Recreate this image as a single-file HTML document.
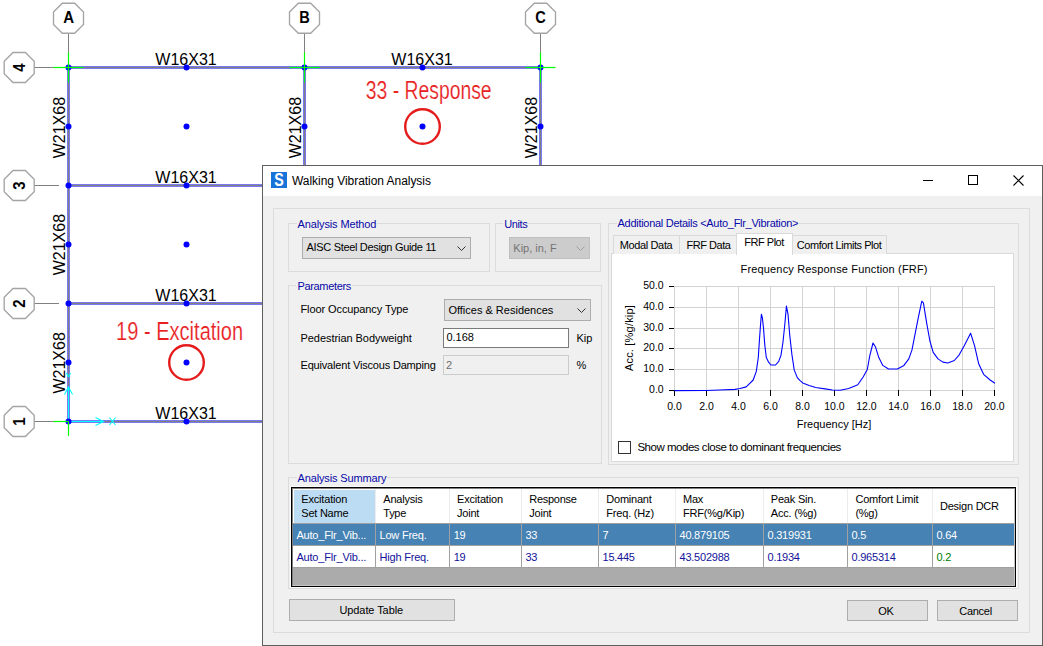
<!DOCTYPE html>
<html><head><meta charset="utf-8">
<style>
*{box-sizing:border-box}
html,body{margin:0;padding:0}
body{width:1043px;height:646px;position:relative;overflow:hidden;background:#fff;font-family:"Liberation Sans",sans-serif;color:#000}
.a{position:absolute}
.t{position:absolute;white-space:nowrap}
</style></head><body>
<svg class="a" style="left:0;top:0" width="1043" height="646">
 <g font-family="Liberation Sans" >
 <!-- grid lines grey -->
 <g stroke="#808080" stroke-width="1" fill="none">
  <line x1="68.5" y1="33" x2="68.5" y2="60"/>
  <line x1="304.5" y1="33" x2="304.5" y2="60"/>
  <line x1="540.5" y1="33" x2="540.5" y2="60"/>
  <line x1="34" y1="67.5" x2="60" y2="67.5"/>
  <line x1="34" y1="185.5" x2="59" y2="185.5"/>
  <line x1="34" y1="303.5" x2="59" y2="303.5"/>
  <line x1="34" y1="421.5" x2="60" y2="421.5"/>
 </g>
 <!-- beams -->
 <g fill="#7878f0">
  <rect x="68" y="66" width="473" height="3"/>
  <rect x="68" y="184" width="473" height="3"/>
  <rect x="68" y="302" width="473" height="3"/>
  <rect x="68" y="420" width="473" height="3"/>
  <rect x="67" y="67" width="3" height="355"/>
  <rect x="303" y="67" width="3" height="355"/>
  <rect x="539" y="67" width="3" height="355"/>
 </g>
 <g fill="#808080">
  <rect x="68" y="67" width="473" height="1"/>
  <rect x="68" y="185" width="473" height="1"/>
  <rect x="68" y="303" width="473" height="1"/>
  <rect x="68" y="421" width="473" height="1"/>
  <rect x="68" y="67" width="1" height="355"/>
  <rect x="304" y="67" width="1" height="355"/>
  <rect x="540" y="67" width="1" height="355"/>
 </g>
 <!-- octagons -->
 <g fill="#fff" stroke="#a4a4a4" stroke-width="1.35">
  <polygon id="oct" points="-6.2,-15 6.2,-15 15,-6.2 15,6.2 6.2,15 -6.2,15 -15,6.2 -15,-6.2" transform="translate(68.5,18.2)"/>
  <polygon points="-6.2,-15 6.2,-15 15,-6.2 15,6.2 6.2,15 -6.2,15 -15,6.2 -15,-6.2" transform="translate(304.5,18.2)"/>
  <polygon points="-6.2,-15 6.2,-15 15,-6.2 15,6.2 6.2,15 -6.2,15 -15,6.2 -15,-6.2" transform="translate(540.5,18.2)"/>
  <polygon points="-6.2,-15 6.2,-15 15,-6.2 15,6.2 6.2,15 -6.2,15 -15,6.2 -15,-6.2" transform="translate(19.2,67.5)"/>
  <polygon points="-6.2,-15 6.2,-15 15,-6.2 15,6.2 6.2,15 -6.2,15 -15,6.2 -15,-6.2" transform="translate(19.2,185.5)"/>
  <polygon points="-6.2,-15 6.2,-15 15,-6.2 15,6.2 6.2,15 -6.2,15 -15,6.2 -15,-6.2" transform="translate(19.2,303.5)"/>
  <polygon points="-6.2,-15 6.2,-15 15,-6.2 15,6.2 6.2,15 -6.2,15 -15,6.2 -15,-6.2" transform="translate(19.2,421.5)"/>
 </g>
 <g font-weight="bold" font-size="17" text-anchor="middle" fill="#000">
  <text transform="translate(68.6,23.3) scale(0.88,1)">A</text>
  <text transform="translate(304.5,23.3) scale(0.86,1)">B</text>
  <text transform="translate(540.5,23.3) scale(0.86,1)">C</text>
  <text transform="translate(24.5,67.5) rotate(-90) scale(0.88,1)">4</text>
  <text transform="translate(24.5,185.5) rotate(-90) scale(0.88,1)">3</text>
  <text transform="translate(24.5,303.5) rotate(-90) scale(0.88,1)">2</text>
  <text transform="translate(24.5,421.5) rotate(-90) scale(0.88,1)">1</text>
 </g>
 <g font-size="16" text-anchor="middle" fill="#000">
  <text x="186" y="65">W16X31</text>
  <text x="422" y="65">W16X31</text>
  <text x="186" y="183">W16X31</text>
  <text x="186" y="301">W16X31</text>
  <text x="186" y="419">W16X31</text>
  <text transform="translate(64.5,127.6) rotate(-90)">W21X68</text>
  <text transform="translate(300.5,127.6) rotate(-90)">W21X68</text>
  <text transform="translate(536.5,127.6) rotate(-90)">W21X68</text>
  <text transform="translate(64.5,244.6) rotate(-90)">W21X68</text>
  <text transform="translate(64.5,362.9) rotate(-90)">W21X68</text>
 </g>
 <!-- cyan local axes -->
 <g stroke="#00ffff" stroke-width="1.1" fill="none">
  <line x1="68.5" y1="421.5" x2="68.5" y2="387"/>
  <polyline points="64.5,394.5 68.5,387 72.5,394.5"/>
  <line x1="68.5" y1="421.5" x2="103.5" y2="421.5"/>
  <polyline points="95.5,417.5 103.5,421.5 95.5,425.5"/>
  <line x1="109.5" y1="417.5" x2="115.5" y2="425"/><line x1="115.5" y1="417.5" x2="109.5" y2="425"/>
  <line x1="66.5" y1="373" x2="68.5" y2="377"/><line x1="70.5" y1="373" x2="68.5" y2="377"/>
 </g>
 <!-- dots -->
 <g fill="#0000ff">
  <circle cx="68.5" cy="67.5" r="3"/><circle cx="304.5" cy="67.5" r="3"/><circle cx="540.5" cy="67.5" r="3"/>
  <circle cx="186.5" cy="67.5" r="3"/><circle cx="422.5" cy="67.5" r="3"/>
  <circle cx="68.5" cy="126.5" r="3"/><circle cx="186.5" cy="126.5" r="3"/><circle cx="304.5" cy="126.5" r="3"/><circle cx="422.5" cy="126.5" r="3"/><circle cx="540.5" cy="126.5" r="3"/>
  <circle cx="68.5" cy="185.5" r="3"/><circle cx="186.5" cy="185.5" r="3"/>
  <circle cx="68.5" cy="244.5" r="3"/><circle cx="186.5" cy="244.5" r="3"/>
  <circle cx="68.5" cy="303.5" r="3"/><circle cx="186.5" cy="303.5" r="3"/>
  <circle cx="68.5" cy="362.5" r="3"/><circle cx="186.5" cy="362.5" r="3"/>
  <circle cx="68.5" cy="421.5" r="3"/><circle cx="186.5" cy="421.5" r="3"/>
 </g>
 <!-- green crosses -->
 <g stroke="#00ff00" stroke-width="1.2">
  <line x1="53.5" y1="67.5" x2="83.5" y2="67.5"/><line x1="68.5" y1="52.5" x2="68.5" y2="82.5"/>
  <line x1="289.5" y1="67.5" x2="319.5" y2="67.5"/><line x1="304.5" y1="52.5" x2="304.5" y2="82.5"/>
  <line x1="525.5" y1="67.5" x2="555.5" y2="67.5"/><line x1="540.5" y1="52.5" x2="540.5" y2="82.5"/>
  <line x1="53.5" y1="421.5" x2="68.5" y2="421.5"/><line x1="68.5" y1="421.5" x2="68.5" y2="436"/>
 </g>
 <g stroke="#e41c1c" stroke-width="2.4" fill="none">
  <circle cx="422.5" cy="126.5" r="17.3"/>
  <circle cx="186.5" cy="362.5" r="17.3"/>
 </g>
 <g fill="#e8201f" font-size="26" stroke="#fff" stroke-width="0.2">
  <text x="365.8" y="99" textLength="125.8" lengthAdjust="spacingAndGlyphs">33 - Response</text>
  <text x="116.1" y="340" textLength="127" lengthAdjust="spacingAndGlyphs">19 - Excitation</text>
 </g>
 </g>
</svg>
<div class="a" style="left:262px;top:165px;width:781px;height:481px;border:1px solid #5e5e5e;background:#f0f0f0;"></div>
<div class="a" style="left:263px;top:166px;width:779px;height:30px;background:#fff;"></div>
<svg class="a" style="left:271px;top:172px" width="16" height="16"><rect width="16" height="16" fill="#1874d8"/><text x="8" y="14.2" font-family="Liberation Sans" font-weight="bold" font-size="17.5" fill="#fff" text-anchor="middle" textLength="9.5" lengthAdjust="spacingAndGlyphs">S</text></svg>
<div class="t" style="left:292.00px;top:174.64px;font-size:12px;line-height:12px;color:#000;letter-spacing:-0.045px;">Walking Vibration Analysis</div>
<div class="a" style="left:923px;top:180px;width:10px;height:1px;background:#000;"></div>
<div class="a" style="left:968px;top:175px;width:10px;height:10px;border:1px solid #000;"></div>
<svg class="a" style="left:1013px;top:175px" width="12" height="11"><path d="M0.5,0.5 L10.5,10.5 M10.5,0.5 L0.5,10.5" stroke="#000" stroke-width="1.1"/></svg>
<div class="a" style="left:273px;top:208px;width:757px;height:425px;border:1px solid #dcdcdc;"></div>
<div class="a" style="left:288px;top:223px;width:202px;height:49px;border:1px solid #dcdcdc;"></div>
<div class="t" style="left:297.50px;top:218.59px;font-size:11px;line-height:11px;color:#0808a8;letter-spacing:-0.125px;background:#f0f0f0;padding:0 1px;margin-left:-1px;">Analysis Method</div>
<div class="a" style="left:302px;top:237px;width:169px;height:22px;background:#e1e1e1;border:1px solid #adadad;"></div>
<div class="t" style="left:306.50px;top:242.49px;font-size:11px;line-height:11px;color:#000;letter-spacing:-0.320px;">AISC Steel Design Guide 11</div>
<svg class="a" style="left:457px;top:246px" width="10" height="6"><path d="M0.5,0.5 L4.5,4.5 L8.5,0.5" stroke="#333" fill="none" stroke-width="1"/></svg>
<div class="a" style="left:495px;top:223px;width:106px;height:49px;border:1px solid #dcdcdc;"></div>
<div class="t" style="left:504.20px;top:218.69px;font-size:11px;line-height:11px;color:#0808a8;letter-spacing:-0.375px;background:#f0f0f0;padding:0 1px;margin-left:-1px;">Units</div>
<div class="a" style="left:509px;top:237px;width:81px;height:22px;background:#cccccc;border:1px solid #bfbfbf;"></div>
<div class="t" style="left:513.30px;top:242.69px;font-size:11px;line-height:11px;color:#747474;">Kip, in, F</div>
<svg class="a" style="left:576px;top:246px" width="10" height="6"><path d="M0.5,0.5 L4.5,4.5 L8.5,0.5" stroke="#a0a0a0" fill="none" stroke-width="1"/></svg>
<div class="a" style="left:608px;top:223px;width:411px;height:242px;border:1px solid #dcdcdc;"></div>
<div class="t" style="left:617.50px;top:218.19px;font-size:11px;line-height:11px;color:#0808a8;letter-spacing:-0.283px;background:#f0f0f0;padding:0 1px;margin-left:-1px;">Additional Details &lt;Auto_Flr_Vibration&gt;</div>
<div class="a" style="left:611px;top:253px;width:403px;height:209px;background:#fff;border:1px solid #d9d9d9;"></div>
<div class="a" style="left:613px;top:235px;width:67px;height:19px;background:#f0f0f0;border:1px solid #d9d9d9;border-bottom:none;"></div>
<div class="a" style="left:679px;top:235px;width:58px;height:19px;background:#f0f0f0;border:1px solid #d9d9d9;border-bottom:none;"></div>
<div class="a" style="left:792px;top:235px;width:95px;height:19px;background:#f0f0f0;border:1px solid #d9d9d9;border-bottom:none;"></div>
<div class="a" style="left:736px;top:233px;width:57px;height:22px;background:#fff;border:1px solid #d9d9d9;border-bottom:none;"></div>
<div class="t" style="left:619.70px;top:239.59px;font-size:11px;line-height:11px;color:#000;letter-spacing:-0.361px;">Modal Data</div>
<div class="t" style="left:686.50px;top:239.59px;font-size:11px;line-height:11px;color:#000;letter-spacing:-0.461px;">FRF Data</div>
<div class="t" style="left:744.30px;top:236.69px;font-size:11px;line-height:11px;color:#000;letter-spacing:-0.482px;">FRF Plot</div>
<div class="t" style="left:796.80px;top:239.59px;font-size:11px;line-height:11px;color:#000;letter-spacing:-0.438px;">Comfort Limits Plot</div>
<div class="a" style="left:288px;top:285px;width:314px;height:179px;border:1px solid #dcdcdc;"></div>
<div class="t" style="left:297.40px;top:280.69px;font-size:11px;line-height:11px;color:#0808a8;letter-spacing:-0.319px;background:#f0f0f0;padding:0 1px;margin-left:-1px;">Parameters</div>
<div class="t" style="left:300.50px;top:303.99px;font-size:11px;line-height:11px;color:#000;letter-spacing:-0.099px;">Floor Occupancy Type</div>
<div class="t" style="left:300.50px;top:332.89px;font-size:11px;line-height:11px;color:#000;letter-spacing:-0.055px;">Pedestrian Bodyweight</div>
<div class="t" style="left:300.50px;top:359.69px;font-size:11px;line-height:11px;color:#000;letter-spacing:-0.179px;">Equivalent Viscous Damping</div>
<div class="a" style="left:444px;top:299px;width:147px;height:22px;background:#e1e1e1;border:1px solid #adadad;"></div>
<div class="t" style="left:448.40px;top:304.79px;font-size:11px;line-height:11px;color:#000;">Offices &amp; Residences</div>
<svg class="a" style="left:577px;top:308px" width="10" height="6"><path d="M0.5,0.5 L4.5,4.5 L8.5,0.5" stroke="#333" fill="none" stroke-width="1"/></svg>
<div class="a" style="left:443px;top:328px;width:126px;height:20px;background:#fff;border:1px solid #7a7a7a;"></div>
<div class="t" style="left:446.40px;top:332.49px;font-size:11px;line-height:11px;color:#000;">0.168</div>
<div class="t" style="left:576.50px;top:332.69px;font-size:11px;line-height:11px;color:#000;">Kip</div>
<div class="a" style="left:443px;top:355px;width:126px;height:20px;background:#f0f0f0;border:1px solid #cccccc;"></div>
<div class="t" style="left:446.00px;top:359.69px;font-size:11px;line-height:11px;color:#6d6d6d;">2</div>
<div class="t" style="left:576.50px;top:359.69px;font-size:11px;line-height:11px;color:#000;">%</div>
<div class="a" style="left:288px;top:477px;width:731px;height:112px;border:1px solid #dcdcdc;"></div>
<div class="t" style="left:297.50px;top:473.09px;font-size:11px;line-height:11px;color:#0808a8;letter-spacing:-0.142px;background:#f0f0f0;padding:0 1px;margin-left:-1px;">Analysis Summary</div>
<div class="a" style="left:290px;top:486px;width:727px;height:102px;background:#fff;"></div>
<div class="a" style="left:291px;top:487px;width:725px;height:100px;background:#ababab;border:1px solid #000;"></div>
<div class="a" style="left:292px;top:488px;width:723px;height:98px;background:#ababab;border-top:1px solid #808080;border-left:1px solid #808080;border-right:1px solid #c4c4c4;border-bottom:1px solid #c4c4c4;"></div>
<div class="a" style="left:293px;top:489px;width:721px;height:34px;background:#fff;"></div>
<div class="a" style="left:294px;top:490px;width:82px;height:33px;background:#bcdcf4;"></div>
<div class="a" style="left:293px;top:523px;width:721px;height:23px;background:#4682b4;border-top:1px solid #a0a0a0;border-bottom:1px solid #a0a0a0;"></div>
<div class="a" style="left:293px;top:546px;width:721px;height:22px;background:#fff;border-bottom:1px solid #a0a0a0;"></div>
<div class="a" style="left:375px;top:523px;width:1px;height:45px;background:#a0a0a0;"></div>
<div class="a" style="left:375px;top:489px;width:1px;height:34px;background:#ececec;"></div>
<div class="a" style="left:449px;top:523px;width:1px;height:45px;background:#a0a0a0;"></div>
<div class="a" style="left:449px;top:489px;width:1px;height:34px;background:#ececec;"></div>
<div class="a" style="left:521px;top:523px;width:1px;height:45px;background:#a0a0a0;"></div>
<div class="a" style="left:521px;top:489px;width:1px;height:34px;background:#ececec;"></div>
<div class="a" style="left:598px;top:523px;width:1px;height:45px;background:#a0a0a0;"></div>
<div class="a" style="left:598px;top:489px;width:1px;height:34px;background:#ececec;"></div>
<div class="a" style="left:675px;top:523px;width:1px;height:45px;background:#a0a0a0;"></div>
<div class="a" style="left:675px;top:489px;width:1px;height:34px;background:#ececec;"></div>
<div class="a" style="left:763px;top:523px;width:1px;height:45px;background:#a0a0a0;"></div>
<div class="a" style="left:763px;top:489px;width:1px;height:34px;background:#ececec;"></div>
<div class="a" style="left:847px;top:523px;width:1px;height:45px;background:#a0a0a0;"></div>
<div class="a" style="left:847px;top:489px;width:1px;height:34px;background:#ececec;"></div>
<div class="a" style="left:932px;top:523px;width:1px;height:45px;background:#a0a0a0;"></div>
<div class="a" style="left:932px;top:489px;width:1px;height:34px;background:#ececec;"></div>
<div class="t" style="left:301.30px;top:494.29px;font-size:11px;line-height:11px;color:#000;letter-spacing:-0.186px;">Excitation</div>
<div class="t" style="left:301.30px;top:508.09px;font-size:11px;line-height:11px;color:#000;letter-spacing:-0.244px;">Set Name</div>
<div class="t" style="left:383.30px;top:494.29px;font-size:11px;line-height:11px;color:#000;letter-spacing:-0.205px;">Analysis</div>
<div class="t" style="left:383.30px;top:508.09px;font-size:11px;line-height:11px;color:#000;letter-spacing:-0.279px;">Type</div>
<div class="t" style="left:457.00px;top:494.29px;font-size:11px;line-height:11px;color:#000;letter-spacing:-0.186px;">Excitation</div>
<div class="t" style="left:457.00px;top:508.09px;font-size:11px;line-height:11px;color:#000;letter-spacing:-0.203px;">Joint</div>
<div class="t" style="left:529.20px;top:494.29px;font-size:11px;line-height:11px;color:#000;letter-spacing:-0.248px;">Response</div>
<div class="t" style="left:529.20px;top:508.09px;font-size:11px;line-height:11px;color:#000;letter-spacing:-0.203px;">Joint</div>
<div class="t" style="left:606.30px;top:494.29px;font-size:11px;line-height:11px;color:#000;letter-spacing:-0.236px;">Dominant</div>
<div class="t" style="left:606.30px;top:508.09px;font-size:11px;line-height:11px;color:#000;letter-spacing:-0.193px;">Freq. (Hz)</div>
<div class="t" style="left:683.10px;top:494.29px;font-size:11px;line-height:11px;color:#000;letter-spacing:-0.363px;">Max</div>
<div class="t" style="left:683.10px;top:508.09px;font-size:11px;line-height:11px;color:#000;letter-spacing:-0.223px;">FRF(%g/Kip)</div>
<div class="t" style="left:770.80px;top:494.29px;font-size:11px;line-height:11px;color:#000;letter-spacing:-0.206px;">Peak Sin.</div>
<div class="t" style="left:770.80px;top:508.09px;font-size:11px;line-height:11px;color:#000;letter-spacing:-0.208px;">Acc. (%g)</div>
<div class="t" style="left:855.40px;top:494.29px;font-size:11px;line-height:11px;color:#000;letter-spacing:-0.191px;">Comfort Limit</div>
<div class="t" style="left:855.40px;top:508.09px;font-size:11px;line-height:11px;color:#000;letter-spacing:-0.271px;">(%g)</div>
<div class="t" style="left:940.00px;top:500.89px;font-size:11px;line-height:11px;color:#000;letter-spacing:-0.238px;">Design DCR</div>
<div class="t" style="left:296.40px;top:530.49px;font-size:11px;line-height:11px;color:#fff;letter-spacing:-0.181px;">Auto_Flr_Vib...</div>
<div class="t" style="left:379.50px;top:530.49px;font-size:11px;line-height:11px;color:#fff;letter-spacing:-0.214px;">Low Freq.</div>
<div class="t" style="left:453.70px;top:530.49px;font-size:11px;line-height:11px;color:#fff;letter-spacing:-0.429px;">19</div>
<div class="t" style="left:525.50px;top:530.49px;font-size:11px;line-height:11px;color:#fff;letter-spacing:-0.429px;">33</div>
<div class="t" style="left:602.50px;top:530.49px;font-size:11px;line-height:11px;color:#fff;">7</div>
<div class="t" style="left:679.50px;top:530.49px;font-size:11px;line-height:11px;color:#fff;letter-spacing:-0.228px;">40.879105</div>
<div class="t" style="left:767.50px;top:530.49px;font-size:11px;line-height:11px;color:#fff;letter-spacing:-0.229px;">0.319931</div>
<div class="t" style="left:851.50px;top:530.49px;font-size:11px;line-height:11px;color:#fff;letter-spacing:-0.267px;">0.5</div>
<div class="t" style="left:936.50px;top:530.49px;font-size:11px;line-height:11px;color:#fff;letter-spacing:-0.249px;">0.64</div>
<div class="t" style="left:296.40px;top:552.29px;font-size:11px;line-height:11px;color:#12129a;letter-spacing:-0.181px;">Auto_Flr_Vib...</div>
<div class="t" style="left:379.50px;top:552.29px;font-size:11px;line-height:11px;color:#12129a;letter-spacing:-0.200px;">High Freq.</div>
<div class="t" style="left:453.70px;top:552.29px;font-size:11px;line-height:11px;color:#12129a;letter-spacing:-0.429px;">19</div>
<div class="t" style="left:525.50px;top:552.29px;font-size:11px;line-height:11px;color:#12129a;letter-spacing:-0.429px;">33</div>
<div class="t" style="left:602.50px;top:552.29px;font-size:11px;line-height:11px;color:#12129a;letter-spacing:-0.235px;">15.445</div>
<div class="t" style="left:679.50px;top:552.29px;font-size:11px;line-height:11px;color:#12129a;letter-spacing:-0.228px;">43.502988</div>
<div class="t" style="left:767.50px;top:552.29px;font-size:11px;line-height:11px;color:#12129a;letter-spacing:-0.235px;">0.1934</div>
<div class="t" style="left:851.50px;top:552.29px;font-size:11px;line-height:11px;color:#12129a;letter-spacing:-0.229px;">0.965314</div>
<div class="t" style="left:936.50px;top:552.29px;font-size:11px;line-height:11px;color:#008000;letter-spacing:-0.267px;">0.2</div>
<div class="a" style="left:289px;top:599px;width:166px;height:22px;background:#e1e1e1;border:1px solid #adadad;"></div>
<div class="t" style="left:339.40px;top:604.69px;font-size:11px;line-height:11px;color:#000;letter-spacing:-0.075px;">Update Table</div>
<div class="a" style="left:847px;top:600px;width:81px;height:21px;background:#e1e1e1;border:1px solid #adadad;"></div>
<div class="t" style="left:878.30px;top:605.89px;font-size:11px;line-height:11px;color:#000;letter-spacing:-0.475px;">OK</div>
<div class="a" style="left:937px;top:600px;width:81px;height:21px;background:#e1e1e1;border:1px solid #adadad;"></div>
<div class="t" style="left:959.30px;top:605.89px;font-size:11px;line-height:11px;color:#000;letter-spacing:-0.290px;">Cancel</div>
<div class="a" style="left:618px;top:441px;width:13px;height:13px;background:#fff;border:1px solid #333;"></div>
<div class="t" style="left:637.40px;top:441.67px;font-size:11.5px;line-height:11.5px;color:#000;letter-spacing:-0.474px;">Show modes close to dominant frequencies</div>
<svg class="a" style="left:0;top:0" width="1043" height="646">
<line x1="674.5" y1="286" x2="674.5" y2="390" stroke="#d3d3d3"/>
<line x1="706.5" y1="286" x2="706.5" y2="390" stroke="#d3d3d3"/>
<line x1="738.5" y1="286" x2="738.5" y2="390" stroke="#d3d3d3"/>
<line x1="770.5" y1="286" x2="770.5" y2="390" stroke="#d3d3d3"/>
<line x1="802.5" y1="286" x2="802.5" y2="390" stroke="#d3d3d3"/>
<line x1="834.5" y1="286" x2="834.5" y2="390" stroke="#d3d3d3"/>
<line x1="866.5" y1="286" x2="866.5" y2="390" stroke="#d3d3d3"/>
<line x1="898.5" y1="286" x2="898.5" y2="390" stroke="#d3d3d3"/>
<line x1="930.5" y1="286" x2="930.5" y2="390" stroke="#d3d3d3"/>
<line x1="962.5" y1="286" x2="962.5" y2="390" stroke="#d3d3d3"/>
<line x1="994.5" y1="286" x2="994.5" y2="390" stroke="#d3d3d3"/>
<line x1="674" y1="390.5" x2="995" y2="390.5" stroke="#d3d3d3"/>
<line x1="669" y1="390.5" x2="674" y2="390.5" stroke="#000"/>
<line x1="674" y1="369.5" x2="995" y2="369.5" stroke="#d3d3d3"/>
<line x1="669" y1="369.5" x2="674" y2="369.5" stroke="#000"/>
<line x1="674" y1="348.5" x2="995" y2="348.5" stroke="#d3d3d3"/>
<line x1="669" y1="348.5" x2="674" y2="348.5" stroke="#000"/>
<line x1="674" y1="328.5" x2="995" y2="328.5" stroke="#d3d3d3"/>
<line x1="669" y1="328.5" x2="674" y2="328.5" stroke="#000"/>
<line x1="674" y1="307.5" x2="995" y2="307.5" stroke="#d3d3d3"/>
<line x1="669" y1="307.5" x2="674" y2="307.5" stroke="#000"/>
<line x1="674" y1="286.5" x2="995" y2="286.5" stroke="#d3d3d3"/>
<line x1="669" y1="286.5" x2="674" y2="286.5" stroke="#000"/>
<line x1="674.5" y1="390" x2="674.5" y2="396" stroke="#000"/>
<line x1="706.5" y1="390" x2="706.5" y2="396" stroke="#000"/>
<line x1="738.5" y1="390" x2="738.5" y2="396" stroke="#000"/>
<line x1="770.5" y1="390" x2="770.5" y2="396" stroke="#000"/>
<line x1="802.5" y1="390" x2="802.5" y2="396" stroke="#000"/>
<line x1="834.5" y1="390" x2="834.5" y2="396" stroke="#000"/>
<line x1="866.5" y1="390" x2="866.5" y2="396" stroke="#000"/>
<line x1="898.5" y1="390" x2="898.5" y2="396" stroke="#000"/>
<line x1="930.5" y1="390" x2="930.5" y2="396" stroke="#000"/>
<line x1="962.5" y1="390" x2="962.5" y2="396" stroke="#000"/>
<line x1="994.5" y1="390" x2="994.5" y2="396" stroke="#000"/>
<polyline points="674.5,390.6 706.5,390.5 719.4,390.0 735.1,389.4 740.0,388.5 746.2,386.9 753.2,380.0 756.3,371.4 758.3,357.5 759.3,342.0 760.4,326.6 761.4,314.2 762.4,318.0 763.5,328.1 764.8,345.1 766.3,357.5 768.6,362.2 770.9,365.0 775.6,365.0 778.7,361.4 781.0,355.2 783.0,342.0 784.9,323.5 786.4,306.1 788.0,314.2 789.8,335.8 791.9,354.4 794.2,369.9 797.3,377.6 800.1,380.7 802.7,382.9 809.1,385.4 815.7,387.5 825.1,388.9 832.3,390.0 840.2,390.2 848.7,388.5 857.8,384.8 863.3,376.8 867.3,369.5 869.8,355.6 873.0,343.0 875.4,346.7 878.7,357.3 882.8,365.4 888.5,369.0 897.4,369.0 903.9,365.4 908.8,358.9 912.0,349.9 915.3,332.9 918.5,316.6 921.8,301.2 923.4,302.8 926.7,323.1 929.9,341.0 933.2,352.4 938.0,358.9 942.9,362.1 947.8,363.0 954.3,360.5 959.2,354.8 964.1,345.9 970.6,333.2 974.6,345.9 978.7,363.8 983.6,374.3 990.1,380.0 995.0,383.3" fill="none" stroke="#0000ff" stroke-width="1.1" stroke-linejoin="round"/>
</svg>
<div class="t" style="left:649.08px;top:383.51px;font-size:10.5px;line-height:10.5px;color:#000;">0.0</div>
<div class="t" style="left:643.20px;top:362.51px;font-size:10.5px;line-height:10.5px;color:#000;">10.0</div>
<div class="t" style="left:643.20px;top:341.51px;font-size:10.5px;line-height:10.5px;color:#000;">20.0</div>
<div class="t" style="left:643.20px;top:321.51px;font-size:10.5px;line-height:10.5px;color:#000;">30.0</div>
<div class="t" style="left:643.20px;top:300.51px;font-size:10.5px;line-height:10.5px;color:#000;">40.0</div>
<div class="t" style="left:643.20px;top:279.51px;font-size:10.5px;line-height:10.5px;color:#000;">50.0</div>
<div class="t" style="left:667.19px;top:401.11px;font-size:10.5px;line-height:10.5px;color:#000;">0.0</div>
<div class="t" style="left:699.19px;top:401.11px;font-size:10.5px;line-height:10.5px;color:#000;">2.0</div>
<div class="t" style="left:731.19px;top:401.11px;font-size:10.5px;line-height:10.5px;color:#000;">4.0</div>
<div class="t" style="left:763.19px;top:401.11px;font-size:10.5px;line-height:10.5px;color:#000;">6.0</div>
<div class="t" style="left:795.19px;top:401.11px;font-size:10.5px;line-height:10.5px;color:#000;">8.0</div>
<div class="t" style="left:824.25px;top:401.11px;font-size:10.5px;line-height:10.5px;color:#000;">10.0</div>
<div class="t" style="left:856.25px;top:401.11px;font-size:10.5px;line-height:10.5px;color:#000;">12.0</div>
<div class="t" style="left:888.25px;top:401.11px;font-size:10.5px;line-height:10.5px;color:#000;">14.0</div>
<div class="t" style="left:920.25px;top:401.11px;font-size:10.5px;line-height:10.5px;color:#000;">16.0</div>
<div class="t" style="left:952.25px;top:401.11px;font-size:10.5px;line-height:10.5px;color:#000;">18.0</div>
<div class="t" style="left:984.25px;top:401.11px;font-size:10.5px;line-height:10.5px;color:#000;">20.0</div>
<div class="t" style="left:740.50px;top:263.69px;font-size:11px;line-height:11px;color:#000;letter-spacing:0.168px;">Frequency Response Function (FRF)</div>
<div class="t" style="left:796.69px;top:418.69px;font-size:11px;line-height:11px;color:#000;">Frequency [Hz]</div>
<div class="t" style="left:628.8px;top:338px;width:0;height:0;"><div style="position:absolute;left:0;top:0;transform:rotate(-90deg) translate(-50%,-50%);transform-origin:0 0;font-size:11px;line-height:11px;white-space:nowrap;letter-spacing:0.2px">Acc. [%g/kip]</div></div>
</body></html>
